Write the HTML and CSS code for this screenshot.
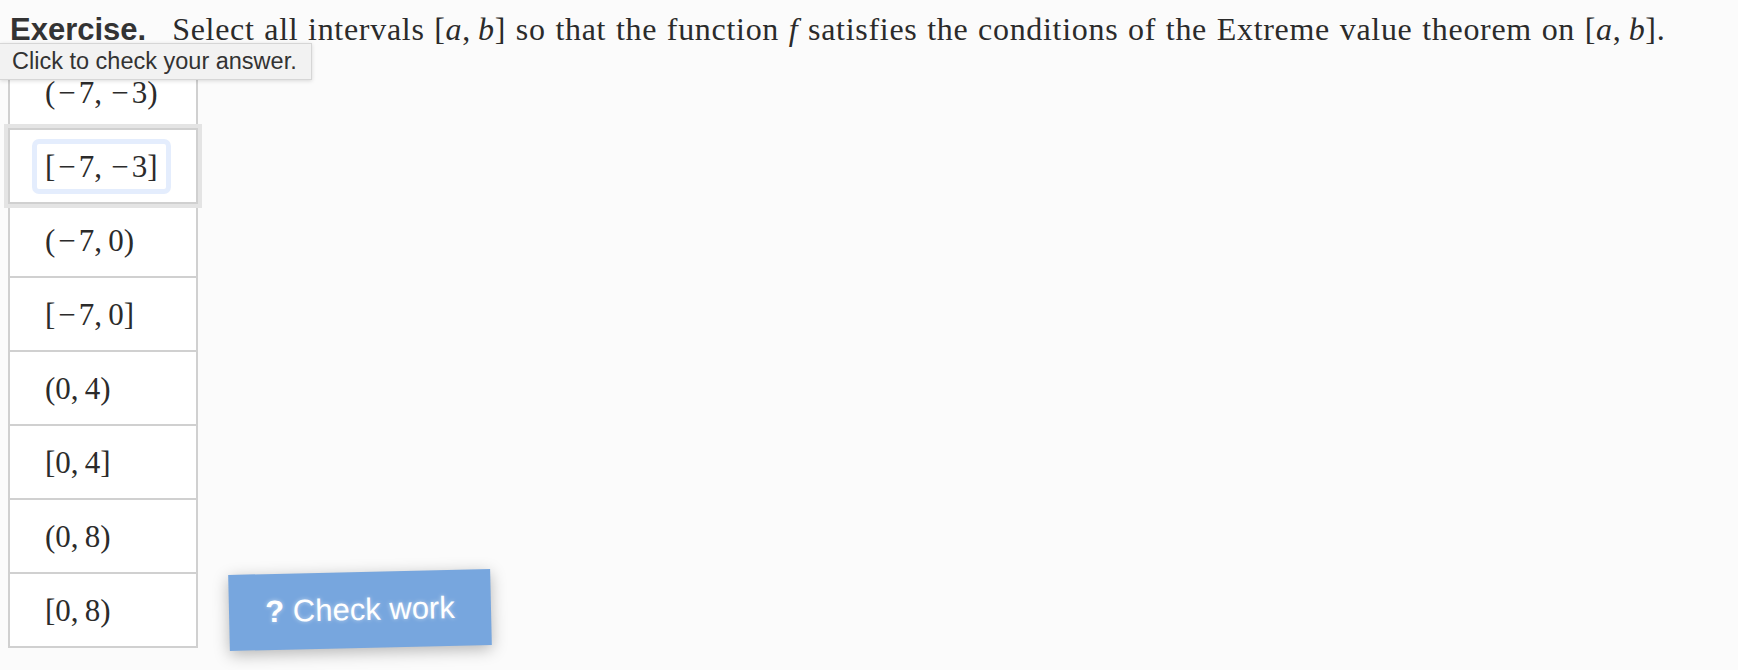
FILE: index.html
```html
<!DOCTYPE html>
<html lang="en">
<head>
<meta charset="utf-8">
<title>Exercise</title>
<link rel="stylesheet" href="styles.css">
</head>
<body>
<div class="page">
  <p class="exercise"><span class="label">Exercise.</span><span class="prompt">Select all intervals <span class="m">[<i>a</i>,&#8201;<i>b</i>]</span> so that the function <i>f</i> satisfies the conditions of the Extreme value theorem on <span class="m">[<i>a</i>,&#8201;<i>b</i>]</span>.</span></p>

  <div class="task">
    <div class="choices">
      <div class="row"><span class="choice">(<span class="neg">−</span>7,&#8201;<span class="neg">−</span>3)</span></div>
      <div class="row selected"><span class="choice">[<span class="neg">−</span>7,&#8201;<span class="neg">−</span>3]</span></div>
      <div class="row"><span class="choice">(<span class="neg">−</span>7,&#8201;0)</span></div>
      <div class="row"><span class="choice">[<span class="neg">−</span>7,&#8201;0]</span></div>
      <div class="row"><span class="choice">(0,&#8201;4)</span></div>
      <div class="row"><span class="choice">[0,&#8201;4]</span></div>
      <div class="row"><span class="choice">(0,&#8201;8)</span></div>
      <div class="row"><span class="choice">[0,&#8201;8)</span></div>
    </div>
    <button class="check" type="button"><span class="q">?</span> Check work</button>
  </div>

  <div class="tooltip">Click to check your answer.</div>
</div>
</body>
</html>
```
FILE: styles.css
```css
html, body {
  margin: 0;
  padding: 0;
  background: #fbfbfb;
}

.page {
  position: relative;
  min-height: 670px;
  color: #2b2b2b;
}

/* heading line */
.exercise {
  margin: 0;
  padding: 11px 0 0 10px;
  height: 36px;
  line-height: 36px;
  white-space: nowrap;
}

.label {
  font-family: "Liberation Sans", Arial, sans-serif;
  font-weight: bold;
  font-size: 31px;
  color: #333;
  margin-right: 26px;
}

.prompt {
  font-family: "Liberation Serif", "Times New Roman", serif;
  font-size: 32px;
  letter-spacing: 0.7px;
  word-spacing: 1px;
}

.prompt i {
  font-style: italic;
}

.m {
  white-space: nowrap;
}

/* choices list + button */
.task {
  display: flex;
  align-items: flex-end;
  margin: 7px 0 0 8px;
}

.choices {
  width: 190px;
  display: flex;
  flex-direction: column;
}

.row {
  position: relative;
  height: 72px;
  border: 2px solid #d0d0d0;
  background: #fff;
  display: flex;
  align-items: center;
  padding-left: 22px;
  box-sizing: content-box;
  margin-top: -2px;
}

.row:first-child {
  margin-top: 0;
}

.row.selected {
  z-index: 1;
  box-shadow: 0 0 0 4px #e4e4e4;
}

.choice {
  display: inline-block;
  border: 5px solid transparent;
  border-radius: 7px;
  padding: 0 8px;
  height: 45px;
  line-height: 45px;
  font-family: "Liberation Serif", "Times New Roman", serif;
  font-size: 31px;
  color: #2b2b2b;
  white-space: nowrap;
}

.neg {
  display: inline-block;
  padding: 0 3px;
}

.row.selected .choice {
  border-color: #e4edfd;
}

.check {
  margin-left: 31px;
  width: 262px;
  height: 76px;
  border: none;
  padding: 0;
  background: #77a6de;
  color: #fff;
  font-family: "Liberation Sans", Arial, sans-serif;
  font-size: 31px;
  text-shadow: 0 0 4px rgba(255, 255, 255, 0.55);
  box-shadow: 0 4px 16px rgba(0, 0, 0, 0.28);
  transform: rotate(-1.3deg);
  cursor: pointer;
}

.check .q {
  font-weight: bold;
}

/* native-style hover tip over the first choice */
.tooltip {
  position: absolute;
  left: 0;
  top: 43px;
  width: 312px;
  height: 37px;
  box-sizing: border-box;
  padding-left: 12px;
  background: #f2f2f2;
  border: 1px solid #d6d6d6;
  border-left: none;
  box-shadow: 0 1px 4px rgba(0, 0, 0, 0.14);
  font-family: "Liberation Sans", Arial, sans-serif;
  font-size: 23.5px;
  line-height: 35px;
  color: #333;
  white-space: nowrap;
}
```
